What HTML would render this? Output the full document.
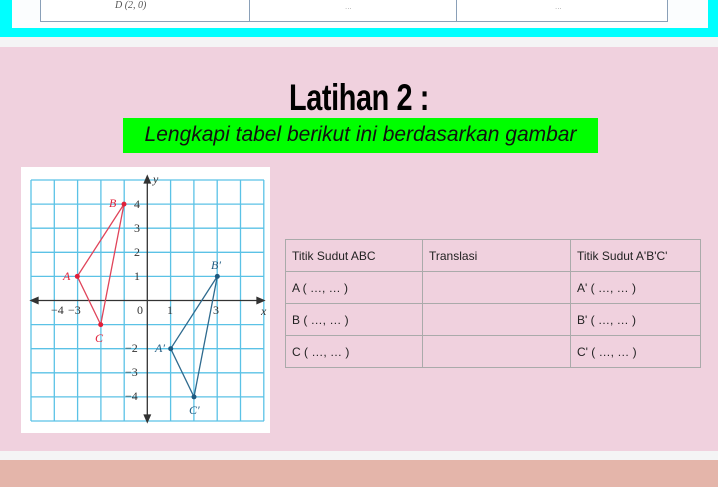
<!DOCTYPE html>
<html><head><meta charset="utf-8"><style>
body{margin:0;width:718px;height:487px;overflow:hidden;background:#f0d1de;font-family:"Liberation Sans",sans-serif;position:relative}
.a{position:absolute}
td{border:1px solid #aaa;font-size:12px;color:#222;padding:0 6px;height:31px}
table{border-collapse:collapse}
</style></head><body>
<div class="a" style="left:0;top:0;width:718px;height:37px;background:#00ffff"></div>
<div class="a" style="left:12px;top:0;width:696px;height:28px;background:#fbfdfe"></div>
<div class="a" style="left:40px;top:0;width:626px;height:21px;border:1px solid #8aa0b8;border-top:none;background:#fff"></div>
<div class="a" style="left:249px;top:0;width:1px;height:21px;background:#8aa0b8"></div>
<div class="a" style="left:456px;top:0;width:1px;height:21px;background:#8aa0b8"></div>
<div class="a" style="left:115px;top:0;font:italic 10px 'Liberation Serif',serif;color:#555">D (2, 0)</div>
<div class="a" style="left:345px;top:2px;font-size:8px;color:#aaa">...</div>
<div class="a" style="left:555px;top:2px;font-size:8px;color:#aaa">...</div>
<div class="a" style="left:0;top:37px;width:718px;height:10px;background:#f4f4f5"></div>
<div class="a" style="left:0;top:77px;width:718px;text-align:center;font:bold 37px 'Liberation Sans Narrow','Liberation Sans',sans-serif;color:#000;transform:scaleX(0.78);white-space:nowrap;letter-spacing:-0.5px">Latihan 2 :</div>
<div class="a" style="left:123px;top:118px;width:475px;height:35px;background:#00ff00"></div>
<div class="a" style="left:123px;top:123px;width:475px;text-align:center;font:italic 21px 'Liberation Sans',sans-serif;color:#111;white-space:nowrap">Lengkapi tabel berikut ini berdasarkan gambar</div>
<svg class="a" style="left:0;top:0" width="718" height="487">
<rect x="21" y="167" width="249" height="266" fill="#fff"/>
<g stroke="#5bc2e6" stroke-width="1.3">
<path d="M31 180V421M54.3 180V421M77.6 180V421M100.9 180V421M124.2 180V421M170.6 180V421M193.9 180V421M217.2 180V421M240.5 180V421M263.8 180V421"/>
<path d="M31 180H264M31 204.1H264M31 228.2H264M31 252.3H264M31 276.4H264M31 324.6H264M31 348.7H264M31 372.8H264M31 396.9H264M31 421H264"/>
</g>
<g stroke="#333" stroke-width="1.3" fill="#333">
<path d="M34 300.5H259M147.3 179V417"/>
<path d="M31 300.5l7-3v6zM264 300.5l-7-3v6zM147.3 176l-3 7h6zM147.3 422l-3-7h6z"/>
</g>
<g stroke="#e0445a" stroke-width="1.3" fill="none"><path d="M77.3 276.4L124 204.1L100.7 324.6Z"/></g>
<g fill="#e0203a"><circle cx="77.3" cy="276.4" r="2.5"/><circle cx="124" cy="204.1" r="2.5"/><circle cx="100.7" cy="324.6" r="2.5"/></g>
<g stroke="#2e6a8e" stroke-width="1.3" fill="none"><path d="M170.7 348.7L217.3 276.4L194 396.9Z"/></g>
<g fill="#1e5a80"><circle cx="170.7" cy="348.7" r="2.5"/><circle cx="217.3" cy="276.4" r="2.5"/><circle cx="194" cy="396.9" r="2.5"/></g>
<g font-family="Liberation Serif,serif" font-size="12" fill="#333">
<text x="134" y="208">4</text><text x="134" y="232">3</text><text x="134" y="256">2</text><text x="134" y="280">1</text>
<text x="125" y="352">−2</text><text x="125" y="376">−3</text><text x="125" y="400">−4</text>
<text x="51" y="314">−4</text><text x="68" y="314">−3</text><text x="137" y="314">0</text><text x="167" y="314">1</text><text x="213" y="314">3</text>
<text x="261" y="315" font-style="italic">x</text><text x="153" y="183" font-style="italic">y</text>
</g>
<g font-family="Liberation Serif,serif" font-size="12" font-style="italic">
<text x="63" y="280" fill="#e0203a">A</text><text x="109" y="207" fill="#e0203a">B</text><text x="95" y="342" fill="#e0203a">C</text>
<text x="155" y="352" fill="#1e5a80">A′</text><text x="211" y="269" fill="#1e5a80">B′</text><text x="189" y="414" fill="#1e5a80">C′</text>
</g>
</svg>
<table class="a" style="left:285px;top:239px;width:416px">
<tr><td style="width:124px">Titik Sudut ABC</td><td style="width:135px">Translasi</td><td>Titik Sudut A'B'C'</td></tr>
<tr><td>A ( …, … )</td><td></td><td>A' ( …, … )</td></tr>
<tr><td>B ( …, … )</td><td></td><td>B' ( …, … )</td></tr>
<tr><td>C ( …, … )</td><td></td><td>C' ( …, … )</td></tr>
</table>
<div class="a" style="left:0;top:451px;width:718px;height:9px;background:#f4f4f5"></div>
<div class="a" style="left:0;top:460px;width:718px;height:27px;background:#e4b5aa"></div>
</body></html>
